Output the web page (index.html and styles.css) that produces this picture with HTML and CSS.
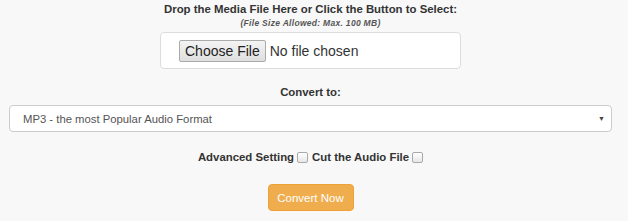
FILE: index.html
```html
<!DOCTYPE html>
<html lang="en">
<head>
    <meta charset="UTF-8">
    <title>Audio Converter</title>
    <link rel="stylesheet" href="styles.css">
</head>
<body>
    <div class="converter">
        <div class="drop-title">Drop the Media File Here or Click the Button to Select:</div>
        <div class="size-note">(File Size Allowed: Max. 100 MB)</div>

        <div class="file-box">
            <button class="file-btn" type="button">Choose File</button>
            <span class="file-name">No file chosen</span>
        </div>

        <div class="convert-label">Convert to:</div>
        <div class="select-box">
            <span>MP3 - the most Popular Audio Format</span>
            <span class="arrow">&#9660;</span>
        </div>

        <div class="options">
            <label>Advanced Setting <span class="check"></span></label>
            <label>Cut the Audio File <span class="check"></span></label>
        </div>

        <button class="convert-btn" type="button">Convert Now</button>
    </div>
</body>
</html>
```

FILE: styles.css
```css
body {
    margin: 0;
    background-color: #f8f8f8;
    font-family: Arial, "Liberation Sans", sans-serif;
    color: #333;
}

.converter {
    display: flex;
    flex-direction: column;
    align-items: center;
    padding: 2px 16px 0 9px;
}

.drop-title {
    font-size: 11.4px;
    font-weight: bold;
    line-height: 15px;
}

.size-note {
    font-size: 8.5px;
    font-style: italic;
    font-weight: bold;
    letter-spacing: 0.3px;
    color: #555;
    line-height: 10px;
    margin-top: 1px;
}

.file-box {
    width: 301px;
    height: 37px;
    box-sizing: border-box;
    margin-top: 4px;
    background-color: #fff;
    border: 1px solid #ddd;
    border-radius: 4px;
    display: flex;
    align-items: center;
    padding-left: 18px;
    gap: 4px;
}

.file-btn {
    font-family: Arial, "Liberation Sans", sans-serif;
    font-size: 14px;
    height: 22px;
    padding: 0 5px;
    background: linear-gradient(#f4f4f4, #dedede);
    border: 1px solid #aaa;
    border-radius: 2px;
    color: #222;
}

.file-name {
    font-size: 14px;
    color: #333;
}

.convert-label {
    font-size: 11.4px;
    font-weight: bold;
    line-height: 15px;
    margin-top: 16px;
}

.select-box {
    align-self: stretch;
    height: 27px;
    box-sizing: border-box;
    margin-top: 5px;
    background-color: #fff;
    border: 1px solid #ccc;
    border-radius: 4px;
    display: flex;
    align-items: center;
    justify-content: space-between;
    padding: 0 6px 0 13px;
    font-size: 11.3px;
    color: #555;
}

.select-box .arrow {
    font-size: 7px;
    color: #444;
}

.options {
    margin-top: 19px;
    font-size: 11.4px;
    font-weight: bold;
    display: flex;
    gap: 4px;
}

.options label {
    display: flex;
    align-items: center;
    gap: 3px;
}

.check {
    display: inline-block;
    width: 9px;
    height: 9px;
    border: 1px solid #aaa;
    border-radius: 2px;
    background: linear-gradient(#fff, #e6e6e6);
}

.convert-btn {
    margin-top: 21px;
    width: 86px;
    height: 27px;
    background-color: #f0ad4e;
    border: 1px solid #eea236;
    border-radius: 4px;
    color: #fff;
    font-family: Arial, "Liberation Sans", sans-serif;
    font-size: 11.5px;
}
```
